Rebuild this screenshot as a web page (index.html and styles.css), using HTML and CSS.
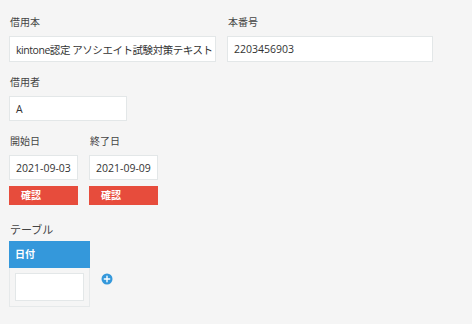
FILE: index.html
```html
<!DOCTYPE html>
<html lang="ja">
<head>
<meta charset="utf-8">
<title>貸出記録</title>
<link rel="stylesheet" href="styles.css">
</head>
<body>
<div class="page">
  <div class="row">
    <div class="field">
      <div class="label">借用本</div>
      <div class="input input-title">kintone認定 アソシエイト試験対策テキスト</div>
    </div>
    <div class="field">
      <div class="label">本番号</div>
      <div class="input input-number">2203456903</div>
    </div>
  </div>
  <div class="row">
    <div class="field">
      <div class="label">借用者</div>
      <div class="input input-user">A</div>
    </div>
  </div>
  <div class="row row-dates">
    <div class="field">
      <div class="label">開始日</div>
      <div class="input input-date">2021-09-03</div>
      <div class="btn">確認</div>
    </div>
    <div class="field">
      <div class="label">終了日</div>
      <div class="input input-date">2021-09-09</div>
      <div class="btn">確認</div>
    </div>
  </div>
  <div class="table-block">
    <div class="label label-table">テーブル</div>
    <div class="table-row">
      <div class="table">
        <div class="table-head">日付</div>
        <div class="table-body">
          <div class="cell-input"></div>
        </div>
      </div>
      <svg class="add" width="12" height="12" viewBox="0 0 12 12">
        <circle cx="6" cy="6" r="5.5" fill="#3498db"/>
        <path d="M6 3.3v5.4M3.3 6h5.4" stroke="#fff" stroke-width="1.4" stroke-linecap="round"/>
      </svg>
    </div>
  </div>
</div>
</body>
</html>
```

FILE: styles.css
```css
html, body {
  margin: 0;
  padding: 0;
  background: #ffffff;
}

body {
  font-family: "Open Sans", "Noto Sans CJK JP", sans-serif;
  color: #333333;
}

.page {
  width: 472px;
  height: 324px;
  box-sizing: border-box;
  background: #f5f5f5;
  padding: 15px 0 0 9px;
}

.row {
  display: flex;
  gap: 11px;
  margin-bottom: 13px;
}

.row-dates {
  gap: 11px;
  margin-bottom: 18px;
}

.field {
  display: flex;
  flex-direction: column;
}

.label {
  font-size: 10px;
  line-height: 14px;
  height: 14px;
  margin-bottom: 7px;
  padding-left: 1px;
  color: #444444;
}

.input {
  box-sizing: border-box;
  background: #ffffff;
  border: 1px solid #e3e7e8;
  font-size: 10.5px;
  color: #333333;
  padding-left: 6px;
  display: flex;
  align-items: center;
  white-space: nowrap;
  overflow: hidden;
}

.input-title {
  width: 207px;
  height: 26px;
  letter-spacing: -0.45px;
}

.input-number {
  width: 206px;
  height: 26px;
}

.input-user {
  width: 118px;
  height: 25px;
}

.input-date {
  width: 69px;
  height: 25px;
}

.btn {
  margin-top: 6px;
  width: 69px;
  height: 19px;
  box-sizing: border-box;
  background: #e74c3c;
  color: #ffffff;
  font-size: 10px;
  font-weight: bold;
  line-height: 19px;
  padding-left: 12px;
}

.label-table {
  font-size: 11px;
  margin-bottom: 4px;
}

.table-row {
  display: flex;
  align-items: flex-start;
  gap: 11px;
}

.table {
  width: 81px;
}

.table-head {
  height: 27px;
  box-sizing: border-box;
  background: #3498db;
  color: #ffffff;
  font-size: 10px;
  font-weight: bold;
  line-height: 27px;
  padding-left: 6px;
}

.table-body {
  box-sizing: border-box;
  height: 39px;
  border: 1px solid #e6e9ea;
  border-top: none;
  padding: 5px 5px 0 5px;
}

.cell-input {
  box-sizing: border-box;
  width: 69px;
  height: 28px;
  background: #ffffff;
  border: 1px solid #e3e7e8;
}

.add {
  margin-top: 32px;
}
```
